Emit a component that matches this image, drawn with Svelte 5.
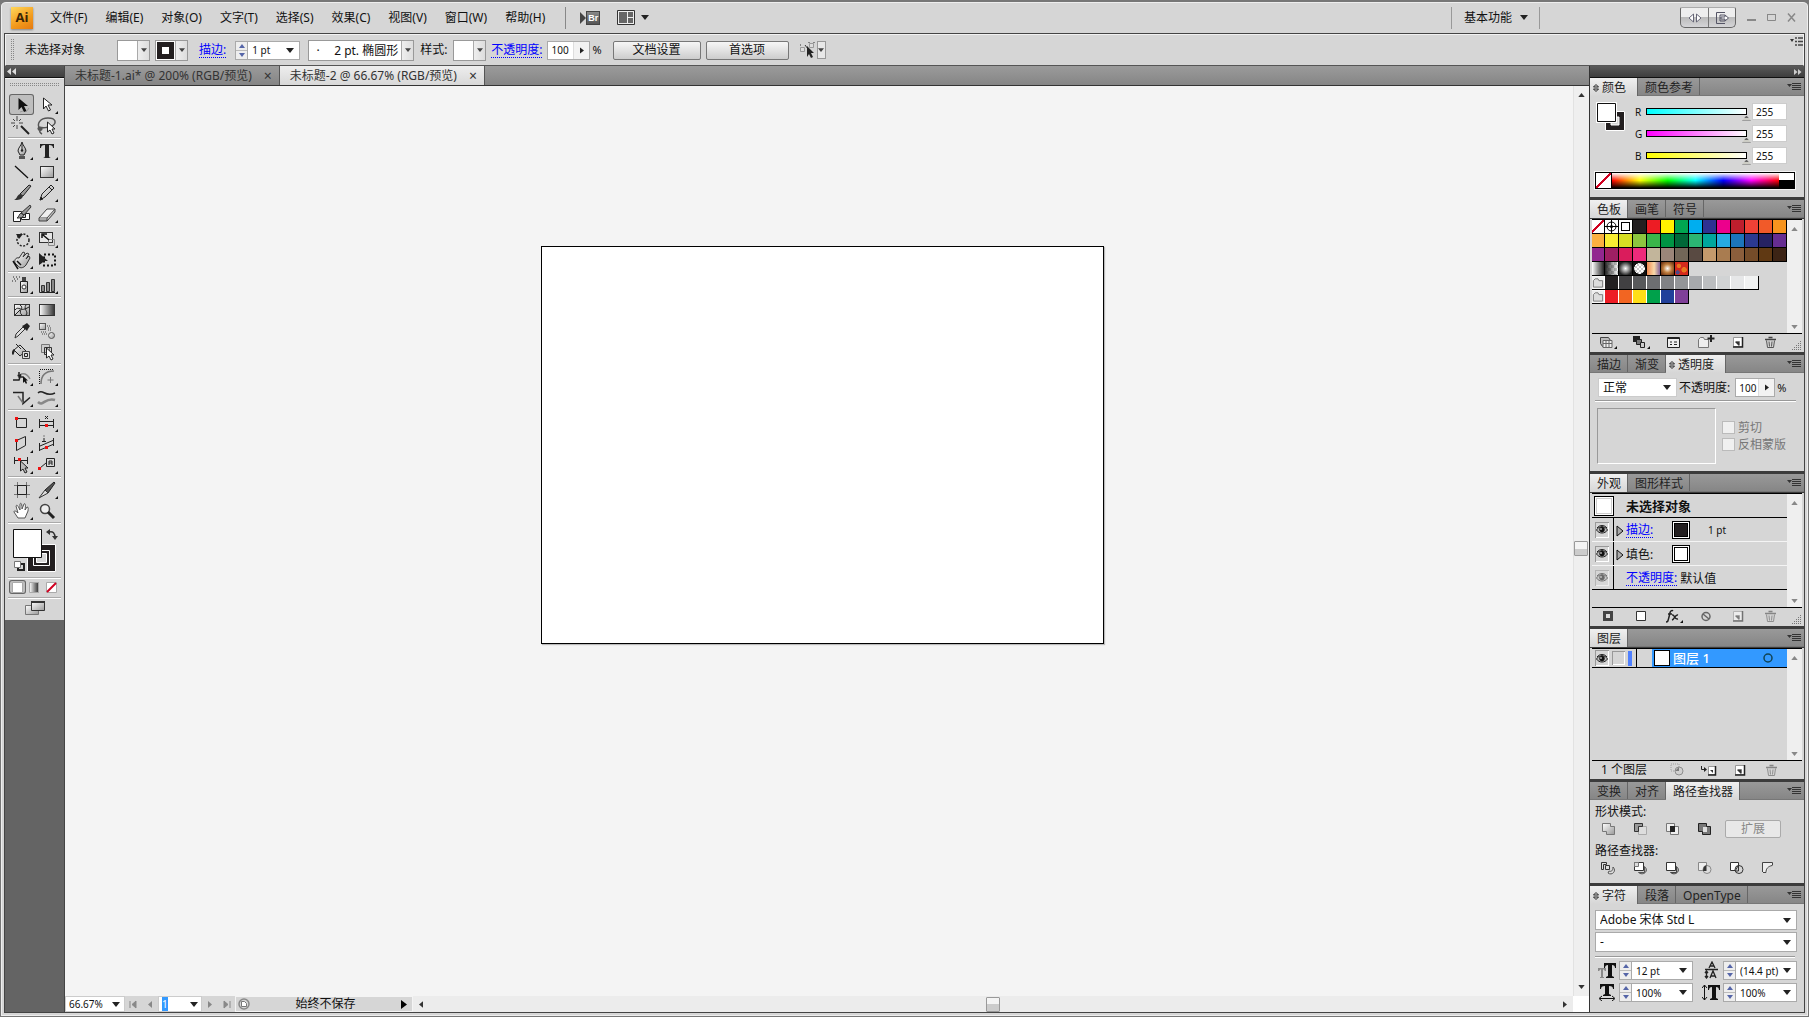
<script lang="ts">
	const menus = ['文件(F)', '编辑(E)', '对象(O)', '文字(T)', '选择(S)', '效果(C)', '视图(V)', '窗口(W)', '帮助(H)'];

	type Tool = { name: string; art: string; more?: boolean; on?: boolean };

	const dark = 'fill="none" stroke="#222"';
	const grey = 'fill="none" stroke="#777"';

	const toolGroups: Tool[][] = [
		[
			{ name: '选择', on: true, art: '<path d="M7.500 3v12l3-3 2.500 5 2.500-1-2.500-5h4z" fill="#111"/><path d="M9 17l3-1M15 17l3-4" stroke="#999"/>' },
			{ name: '直接选择', more: true, art: '<path d="M7.500 3v11l2.500-3 2.500 5 2-1-2.500-5h4z" fill="#fff" stroke="#222"/>' },
			{ name: '魔棒', art: '<path d="M10 10l8 8" stroke="#222" stroke-width="2"/><path d="M6 0v5M6 9v4M0 7h4M8 7h4M2 3l2 2M2 11l2-2M10 3l-2 2" stroke="#444"/>' },
			{ name: '套索', art: '<path d="M4 13C0 8 4 2 12 2s9 5 4 8c-4 2-10 2-13 1-2 2 0 4 2 3s0-4-1-1 0 4 2 5" fill="none" stroke="#555" stroke-width="1.500"/><path d="M11.500 6v10l2.500-2 2 4 2-1-2-4h3z" fill="#fff" stroke="#222"/>' }
		],
		[
			{ name: '钢笔', more: true, art: '<path d="M11 1c-1 4-4 6-4 9l2 4h4l2-4c0-3-3-5-4-9z" fill="url(#metal)" stroke="#222"/><path d="M11 3v6" stroke="#222"/><circle cx="11" cy="9.500" r="1.200" fill="#222"/><path d="M8 15h6v3H8z" fill="#555"/>' },
			{ name: '文字', more: true, art: '<path d="M4 3h14v4h-1c0-2-1-3-4-3v11c0 1 1 2 2 2H7c1 0 2-1 2-2V4C6 4 5 5 5 7H4z" fill="#222"/>' },
			{ name: '直线段', more: true, art: '<path d="M4 4l13 12" stroke="#111" stroke-width="1.300"/>' },
			{ name: '矩形', more: true, art: '<rect x="4.500" y="4.500" width="13" height="11" fill="url(#metal)" stroke="#333"/>' },
			{ name: '画笔', art: '<path d="M18 2l2 1-8 10-3-2z" fill="#999" stroke="#222"/><path d="M9 11l3 2c-1 4-5 4-9 4 3-1 3-5 6-6z" fill="#333"/>' },
			{ name: '铅笔', more: true, art: '<path d="M4 17l2-6L15 2l3 3-9 9z" fill="url(#metal)" stroke="#222"/><path d="M4 17l1-3 2 2zM13 4l3 3" fill="#111" stroke="#222"/>' },
			{ name: '斑点画笔', art: '<path d="M2.500 7.500h8v8h8v-6h-4v4h-5v4h-7z" fill="#fff" stroke="#222"/><path d="M19 1l1 2-7 8-3-2zM10 9l3 2c-1 3-4 3-7 3 2-1 2-4 4-5z" fill="#999" stroke="#333"/>' },
			{ name: '橡皮擦', more: true, art: '<path d="M3 14l8-9h8l-8 9z" fill="#eee" stroke="#444"/><path d="M3 14v3h8v-3M11 17l8-9V5" fill="#aaa" stroke="#444"/>' }
		],
		[
			{ name: '旋转', more: true, art: '<circle cx="12" cy="11" r="6" fill="none" stroke="#222" stroke-width="1.500" stroke-dasharray="2 1.500"/><path d="M5 5h7l-4 5z" fill="#222"/>' },
			{ name: '比例缩放', more: true, art: '<rect x="3.500" y="3.500" width="13" height="10" fill="#e6e6e6" stroke="#333"/><path d="M12.500 10.500h6v6h-6z" fill="none" stroke="#888"/><path d="M7 6l6 5M6 9V5h5" fill="none" stroke="#111" stroke-width="1.500"/>' },
			{ name: '变形', more: true, art: '<path d="M4 13c-1-3 1-6 4-5l4-6 2 1-2 4 4-4 2 1-3 5 3-3 1 2-4 7c-3 4-7 3-8 1z" fill="url(#metal)" stroke="#333"/><path d="M2 11l5 8M6 11l4 4" stroke="#111" stroke-width="1.500"/>' },
			{ name: '自由变换', art: '<path d="M8 4.500h11v11H8z" fill="none" stroke="#111" stroke-width="2" stroke-dasharray="2 2"/><path d="M3 3v12l3-2 2-2 4 0z" fill="#222"/>' }
		],
		[
			{ name: '符号喷枪', more: true, art: '<path d="M9.500 6.500h7v11h-7z" fill="url(#metal)" stroke="#222"/><path d="M11 2h4v4h-4z" fill="#444"/><circle cx="13" cy="12" r="2" fill="#fff" stroke="#333"/><path d="M2 2h8M3 4h6M1 6h6" stroke="#222" stroke-dasharray="1 2"/>' },
			{ name: '柱形图', more: true, art: '<path d="M3.500 2v15.500H19" fill="none" stroke="#222"/><path d="M5.500 10.500h3v6h-3zM10.500 7.500h3v9h-3zM15.500 4.500h3v12h-3z" fill="#888" stroke="#333"/>' }
		],
		[
			{ name: '网格', art: '<rect x="3.500" y="4.500" width="15" height="11" fill="url(#metal)" stroke="#333"/><path d="M4 10c4-5 5 3 14-3M9 5c5 3-3 6 2 10M15 5c-3 4 3 7 0 10M4 15l5-5" fill="none" stroke="#222"/>' },
			{ name: '渐变', art: '<rect x="3.500" y="4.500" width="15" height="11" fill="url(#ramp)" stroke="#333"/>' },
			{ name: '吸管', more: true, art: '<path d="M4 17l1-4 7-7 2 2-7 7z" fill="#ddd" stroke="#333"/><path d="M11 5l2-1 3-2 3 3-2 3-1 2z" fill="#222"/>' },
			{ name: '混合', art: '<rect x="3.500" y="2.500" width="6" height="6" fill="url(#metal)" stroke="#555"/><circle cx="15.500" cy="14.500" r="3" fill="url(#metal)" stroke="#555"/><path d="M11 5h3M12 7h4M5 11h6M6 13h5M12 9h4" stroke="#444" stroke-dasharray="1 1"/>' },
			{ name: '实时上色', art: '<path d="M3 8l6-5 6 6-6 5z" fill="url(#metal)" stroke="#222"/><path d="M3 7c-3 2-2 6-1 6s1-3 2-4z" fill="#222"/><path d="M5 2l5 5" stroke="#222" fill="none"/><path d="M11.500 9.500h7v7h-7z" fill="#ddd" stroke="#444"/><path d="M13.500 11.500h3v3h-3z" fill="none" stroke="#222"/>' },
			{ name: '实时上色选择', art: '<path d="M5.500 2.500h8v8h-8z" fill="#ccc" stroke="#777"/><path d="M8.500 5.500h7v7h-7z" fill="none" stroke="#333"/><path d="M10.500 6v10l2.500-2 2 4 2-1-2-4h3z" fill="#fff" stroke="#222"/>' }
		],
		[
			{ name: '变形路径', more: true, art: '<path d="M2 13h6l2-6M8 5v5h4M6.500 8.500h3" fill="none" stroke="#222" stroke-width="1.500"/><path d="M10 7c4-1 7 1 9 5" fill="none" stroke="#888" stroke-width="1.500"/><path d="M12 9v7l1.500-1.500 1.500 2.500 1-1-1-2.500h2z" fill="#111"/>' },
			{ name: '圆角路径', more: true, art: '<path d="M4 2.500h14M3.500 4v13" stroke="#111" stroke-dasharray="1 1"/><path d="M5 17C5 9 9 4 18 4" fill="none" stroke="#777" stroke-width="1.500"/><path d="M14.500 10v6M11.500 13h6" stroke="#777"/>' },
			{ name: '折线路径', more: true, art: '<path d="M2 4.500h10v11l7-6" fill="none" stroke="#222" stroke-width="1.500"/><path d="M7 8l5 7" fill="none" stroke="#777" stroke-width="1.500"/>' },
			{ name: '曲线路径', more: true, art: '<path d="M2 5c5-5 7 5 17 0" fill="none" stroke="#222" stroke-width="1.500"/><path d="M2 14c5 5 7-5 17-2" fill="none" stroke="#888" stroke-width="2.500"/>' }
		],
		[
			{ name: '矩形标注', more: true, art: `<path d="M5.500 5.500h10v9h-10z" ${dark}/><path d="M4 4h3v3H4z" fill="#e11"/>` },
			{ name: '距离标注', more: true, art: `<path d="M3.500 6v9M17.500 6v9M3 8.500h15M3 12.500h15M9 3l3 3M12 3L9 6" ${dark}/><path d="M9 11h3v3H9z" fill="#e11"/>` },
			{ name: '斜切标注', more: true, art: `<path d="M5.500 6.500l9-4v9l-9 5z" ${dark}/><path d="M4 5h3v3H4z" fill="#e11"/>` },
			{ name: '信息标注', more: true, art: `<path d="M3.500 9v8M17.500 4v8M4 12l14-6M4 16l14-6M8 1.500v1M8 4v4M6 7.500h4" ${dark}/><path d="M9 12h3v3H9z" fill="#e11"/>` },
			{ name: '尺寸选择', more: true, art: `<path d="M3.500 2v7M16.500 2v7M3 5.500h14" ${dark}/><path d="M7 3h3v3H7z" fill="#e11"/><path d="M9.500 6v10l2.500-2 2 4 2-1-2-4h3z" fill="#bbb" stroke="#222"/>` },
			{ name: '文字标注', more: true, art: `<path d="M10.500 3.500h8v8h-8zM10 8L4 13M13 10V6h3v4M13 8h3" ${dark}/><path d="M2 12h3v3H2z" fill="#e11"/>` }
		],
		[
			{ name: '画板', art: `<path d="M6.500 2v16M15.500 2v16M3 5.500h16M3 14.500h16" ${grey}/><path d="M6.500 5.500h9v9h-9z" ${dark}/>` },
			{ name: '切片', more: true, art: '<path d="M18 2l1 1-7 10-3-3z" fill="#555" stroke="#222"/><path d="M9 10l3 3-9 5z" fill="#ddd" stroke="#333"/>' },
			{ name: '抓手', more: true, art: '<path d="M7 17L3 11c0-2 2-1 4 1L5 5c1-2 2 0 4 4V3c1-2 2 0 2 5l2-5c1-1 2 0 1 6l2-3c2 0 1 2 1 4l-3 7z" fill="#fff" stroke="#555"/>' },
			{ name: '缩放', art: '<circle cx="9" cy="8" r="4.500" fill="#eee" stroke="#444" stroke-width="1.500"/><path d="M12 11l6 6" stroke="#222" stroke-width="3"/>' }
		]
	];

	const plainRows = [
		['none', 'registration', 'white-boxed', '#231f20', '#ed1c24', '#fff200', '#00a651', '#00aeef', '#2e3192', '#ec008c', '#be1e2d', '#ef4136', '#f15a29', '#f7941e'],
		['#fbb040', '#f9ed32', '#d7df23', '#8dc63f', '#39b54a', '#009444', '#006838', '#2bb673', '#00a79d', '#27aae1', '#1c75bc', '#2b3990', '#262262', '#662d91'],
		['#92278f', '#9e1f63', '#da1c5c', '#ee2a7b', '#c2b59b', '#9b8579', '#726658', '#594a42', '#c49a6c', '#a97c50', '#8b5e3c', '#754c29', '#603913', '#3c2415'],
		[
			'linear-gradient(90deg,#fff,#222)',
			'linear-gradient(90deg,#222,#fff0),repeating-conic-gradient(#ccc 0 25%,#fff 0 50%) 0 0/6px 6px',
			'radial-gradient(#fff,#222 75%)',
			'radial-gradient(#fff0 55%,#111 60%),repeating-conic-gradient(#ccc 0 25%,#fff 0 50%) 0 0/4px 4px',
			'linear-gradient(90deg,#f08a50,#f9d9a8 55%,#83639a)',
			'radial-gradient(#fff,#c08040 45%,#5a2008)',
			'radial-gradient(circle at 70% 60%,#e8771e 20%,#0000 25%),radial-gradient(circle at 20% 80%,#4a4a8a 12%,#0000 16%),radial-gradient(circle at 30% 30%,#e8771e 14%,#d42a1c 20%)'
		]
	];
	const groupRows = [
		['#231f20', '#414042', '#58595b', '#6d6e71', '#808285', '#939598', '#a7a9ac', '#bcbec0', '#d1d3d4', '#e6e7e8', '#f1f2f2'],
		['#ed1c24', '#f26522', '#ffde17', '#00a14b', '#21409a', '#7f3f98']
	];

	const newIcon = '<path d="M3.500 2.500h9v9h-9z" fill="#fff" stroke="#999"/><path d="M12.500 2v10H3" fill="none" stroke="#222" stroke-width="1.500"/><path d="M5 7h4v4z" fill="#333"/><path d="M5.500 6.500h4v4" fill="none" stroke="#777"/>';
	const trashIcon = '<path d="M2 4.500h11M5.500 2.500h4" fill="none" stroke="#444" stroke-width="1.500"/><path d="M3.500 5.500l1 7h6l1-7M6 6.500l.500 5M9 6.500l-.500 5" fill="none" stroke="#555"/>';
	const swatchFooter = [
		{ name: '色板库', more: true, art: '<path d="M1.500 2.500h8l2 3v6h-8l-2-3z" fill="#bbb" stroke="#444"/><path d="M4 5.500h9v7H4zM4 8.500h9M7 5v7M10 5v7" fill="#eee" stroke="#666"/>' },
		{ name: '显示色板类型', more: true, art: '<path d="M1 1h7v6H1z" fill="#222"/><path d="M4.500 4.500h5v5h-5z" fill="#777" stroke="#222"/><path d="M8.500 7.500h4v5h-4z" fill="#ccc" stroke="#222"/>' },
		{ name: '色板选项', art: '<path d="M2.500 2.500h12v10h-12z" fill="#eee" stroke="#222"/><path d="M2 3.500h13M5 7h2M9 7h3M5 9.500h2M9 9.500h3" stroke="#222"/>' },
		{ name: '新建颜色组', art: '<path d="M1.500 4.500l2-2h3l1 2h4v8h-10z" fill="#eee" stroke="#777"/><path d="M14 0v7M10.500 3.500h7" stroke="#222" stroke-width="2"/>' },
		{ name: '新建色板', art: newIcon },
		{ name: '删除色板', art: trashIcon }
	];
	const appearanceFooter = [
		{ name: '添加新描边', art: '<path d="M4 2h10v10H4z" fill="#444"/><path d="M7 5h4v4H7z" fill="#ddd"/>' },
		{ name: '添加新填色', art: '<path d="M4.500 2.500h9v9h-9z" fill="#fff" stroke="#333"/>' },
		{ name: '添加新效果', more: true, art: '<path d="M1 13c2 0 2-1 3-5l1-4c0-2 2-3 3-2M3 5h4M7 6c3-1 2 5 6 4M13 6c-3-1-3 4-6 5" fill="none" stroke="#222" stroke-width="1.500"/>' },
		{ name: '清除外观', art: '<circle cx="9" cy="7.500" r="4" fill="none" stroke="#666" stroke-width="1.500"/><path d="M6 5l6 5" stroke="#666" stroke-width="1.500"/>' },
		{ name: '复制所选项目', dim: true, art: newIcon },
		{ name: '删除所选项目', dim: true, art: trashIcon }
	];
	const layerFooter = [
		{ name: '建立剪切蒙版', dim: true, art: '<path d="M2 1h8v7H2z" fill="none" stroke="#777" stroke-dasharray="1 1"/><circle cx="10" cy="8" r="4" fill="#ccc" stroke="#555"/><path d="M6 8l4-4v4z" fill="#333"/>' },
		{ name: '创建新子图层', art: '<path d="M1.500 3v3.500H5" fill="none" stroke="#222"/><path d="M4 4v5l3-2.500z" fill="#222"/><path d="M8.500 3.500h7v8h-7z" fill="#fff" stroke="#999"/><path d="M15.500 3v9H8" fill="none" stroke="#222" stroke-width="1.500"/><path d="M10 7h3v3z" fill="#333"/>' },
		{ name: '创建新图层', art: newIcon },
		{ name: '删除所选图层', dim: true, art: trashIcon }
	];

	const shapeModes = [
		{ name: '联集', art: '<path d="M2.500 1.500h8v3h4v8h-8v-3h-4z" fill="url(#metal)" stroke="#777"/>' },
		{ name: '减去顶层', art: '<path d="M6.500 4.500h8v8h-8z" fill="#ddd" stroke="#aaa"/><path d="M2.500 1.500h8v3h-4v5h-4z" fill="#999" stroke="#333"/>' },
		{ name: '交集', art: '<path d="M2.500 1.500h8v8h-8zM6.500 4.500h8v8h-8z" fill="#eee" stroke="#777"/><path d="M6 4h5v6H6z" fill="#222"/>' },
		{ name: '差集', art: '<path d="M2.500 1.500h8v3h4v8h-8v-3h-4z" fill="#777" stroke="#222"/><path d="M7 5h4v5H7z" fill="#ddd"/>' }
	];
	const pathModes = [
		{ name: '分割', art: '<path d="M1.500 1.500h5v2h-3v5h-2z" fill="#ddd" stroke="#333"/><path d="M5.500 4.500h4v4h-4z" fill="#ddd" stroke="#333"/><path d="M13 6c4 4-1 9-5 6l1-2c2 1 4 0 4-4z" fill="#ddd" stroke="#555"/>' },
		{ name: '修边', art: '<path d="M2.500 1.500h9v8h-9z" fill="#fff" stroke="#333"/><path d="M2.500 1.500h4v4h-4z" fill="#ddd" stroke="#777"/><path d="M12.500 5.500c5 4-1 10-6 6h6z" fill="#bbb" stroke="#555"/>' },
		{ name: '合并', art: '<path d="M2.500 1.500h9v8h-9z" fill="#fff" stroke="#333"/><path d="M12.500 5.500c5 4-1 10-6 6h6z" fill="#bbb" stroke="#444"/>' },
		{ name: '裁剪', art: '<path d="M2.500 1.500h8v8h-8z" fill="#eee" stroke="#888"/><circle cx="11" cy="8.500" r="4" fill="#ddd" stroke="#888"/><path d="M10.500 4v6H7c0-3 1-5 3.500-6z" fill="#333"/>' },
		{ name: '轮廓', art: '<path d="M2.500 1.500h8v8h-8z" fill="#fff" stroke="#333"/><circle cx="11" cy="8.500" r="4" fill="none" stroke="#333"/><path d="M10.500 4v6H7z" fill="#ccc" stroke="#333"/>' },
		{ name: '减去后方对象', art: '<path d="M2.500 1.500h10v3c-4 0-5 3-5 7h-5z" fill="#eee"/><path d="M2.500 11V1.500h10v3M3 11.500h3c0-4 2-6 6-7" fill="none" stroke="#444"/>' }
	];

	const charFields = [
		{ name: '字体大小', value: '12 pt', art: '<path d="M0 7h8v3H7L5 8v8h1v1H2v-1h1V8L1 10H0z" fill="#888"/><path d="M6 2h12v5h-1c0-2-1-3-3-3v11l2 1v1H8v-1l2-1V4C8 4 7 5 7 7H6z" fill="#111"/>' },
		{ name: '行距', value: '(14.4 pt)', art: '<path d="M7 7l3-6 3 6M8 5h4M3 8.500h13M8 17l3-7 3 7M9 15h4M4.500 10v7M3 12l1.500-2L6 12M3 15l1.500 2L6 15" fill="none" stroke="#222" stroke-width="1.300"/>' },
		{ name: '水平缩放', value: '100%', art: '<path d="M2 1h14v5h-1c0-2-1-3-4-3v8l2 1v1H5v-1l2-1V3C4 3 3 4 3 6H2z" fill="#111"/><path d="M2 15.500h14M4 13l-3 2.500L4 18M14 13l3 2.500-3 2.500" fill="none" stroke="#111"/>' },
		{ name: '垂直缩放', value: '100%', art: '<path d="M6 2h12v5h-1c0-2-1-3-3-3v11l2 1v1H8v-1l2-1V4C8 4 7 5 7 7H6z" fill="#111"/><path d="M2.500 2v15M0 5l2.500-3L5 5M0 14l2.500 3L5 14" fill="none" stroke="#111"/>' }
	];

	const channels = [
		{ name: 'R', cls: 'cyan' },
		{ name: 'G', cls: 'magenta' },
		{ name: 'B', cls: 'yellow' }
	];
	let rgb = $state([255, 255, 255]);
</script>

{#snippet down(cls = '')}
	<svg class="down {cls}" width="8" height="5" viewBox="0 0 8 5" aria-hidden="true"><path d="M0 0h8L4 5z" /></svg>
{/snippet}

{#snippet play(cls = '')}
	<svg class="play {cls}" width="6" height="9" viewBox="0 0 6 9" aria-hidden="true"><path d="M0 0v9l6-4.500z" /></svg>
{/snippet}

{#snippet stepper(name)}
	<span class="stepper">
		<button aria-label="增加{name}"><svg width="6" height="4" viewBox="0 0 6 4"><path d="M0 4h6L3 0z" /></svg></button>
		<button aria-label="减少{name}"><svg width="6" height="4" viewBox="0 0 6 4"><path d="M0 0h6L3 4z" /></svg></button>
	</span>
{/snippet}

{#snippet combo(name, value, cls = '', step = false)}
	<span class="combo {cls}">
		{#if step}{@render stepper(name)}{/if}
		<select aria-label={name}><option>{value}</option></select>
		{@render down()}
	</span>
{/snippet}

{#snippet percent(id)}
	<span class="percent">
		<input {id} value="100" />
		<button aria-label="调整不透明度">{@render play()}</button>
	</span>
	<span class="unit">%</span>
{/snippet}

{#snippet tabs(names, active, arrows = false)}
	<div class="tabs">
		{#each names as name, i}
			<button class="tab" class:active={i === active} class:arrows={arrows && i === active}>
				{#if arrows && i === active}
					<svg width="6" height="8" viewBox="0 0 6 8"><path d="M.500 3L3 .500 5.500 3zM.500 5L3 7.500 5.500 5z" fill="none" stroke="#222" /></svg>
				{/if}
				{name}
			</button>
		{/each}
		<button class="panel-menu" aria-label="面板菜单">
			<svg width="14" height="9" viewBox="0 0 14 9"><path d="M0 2h5L2.500 5z" fill="#333" /><path d="M5 1.500h9M5 3.500h9M5 5.500h9M5 7.500h9" stroke="#333" /></svg>
		</button>
	</div>
{/snippet}

{#snippet scroll()}
	<div class="scroll">
		<svg width="7" height="4" viewBox="0 0 8 5"><path d="M0 5h8L4 0z" /></svg>
		<svg width="7" height="4" viewBox="0 0 8 5"><path d="M0 0h8L4 5z" /></svg>
	</div>
{/snippet}

{#snippet iconButtons(items)}
	{#each items as item}
		<button class="icon" class:dim={item.dim} aria-label={item.name}>
			<svg width="18" height="15" viewBox="0 0 18 15">
				{@html item.art}
				{#if item.more}<path d="M18 11v3h-3z" fill="#111" />{/if}
			</svg>
		</button>
	{/each}
{/snippet}

{#snippet grip()}
	<svg class="grip" width="10" height="10" viewBox="0 0 10 10">
		<path d="M8 1.500h1M6 3.500h3M4 5.500h5M2 7.500h7M0 9.500h9" stroke="#777" stroke-dasharray="1 1" />
	</svg>
{/snippet}

{#snippet eye(dim = false)}
	<button class="eye" class:dim aria-label="切换可见性">
		<svg width="12" height="9" viewBox="0 0 12 9">
			<path d="M.500 5C3 .500 9 .500 11.500 5 9 9 3 9 .500 5z" fill="#bbb" stroke="#222" />
			<circle cx="6" cy="4.500" r="2.700" fill="#111" /><circle cx="5" cy="4" r="1" fill="#aaa" />
			<path d="M1 3C4-.500 8-.500 11 3" fill="none" stroke="#222" />
		</svg>
	</button>
{/snippet}

<div class="window">
	<header class="menubar">
		<div class="logo">
			<svg width="0" height="0" viewBox="0 0 1 1">
				<defs>
					<linearGradient id="metal" x2="1" y2="1"><stop stop-color="#fff" /><stop offset="1" stop-color="#999" /></linearGradient>
					<linearGradient id="ramp"><stop stop-color="#fff" /><stop offset="1" stop-color="#333" /></linearGradient>
				</defs>
			</svg>
			Ai
		</div>
		<nav>
			{#each menus as menu}<button>{menu}</button>{/each}
		</nav>
		<div class="launch">
			<button class="bridge" aria-label="转到 Bridge">
				<svg width="6" height="14" viewBox="0 0 6 14"><path d="M0 1v12l6-6z" fill="#444" /></svg><span>Br</span>
			</button>
			<button class="arrange" aria-label="排列文档">
				<svg width="18" height="15" viewBox="0 0 18 15"><path d="M.500.500h17v14H.500z" fill="#eee" stroke="#333" /><path d="M2 2h8v11H2zM11 2h5v5h-5zM11 8h5v5h-5z" fill="#666" /></svg>
				{@render down()}
			</button>
		</div>
		<button class="workspace-name">基本功能 {@render down()}</button>
		<div class="mode">
			<button aria-label="切换宽度"><svg width="14" height="10" viewBox="0 0 14 10"><path d="M5.500 1v8L1 5zM8.500 1v8L13 5z" fill="#fff" stroke="#667" /></svg></button>
			<button aria-label="切换面板"><svg width="13" height="12" viewBox="0 0 13 12"><path d="M9 .500H.500v11H9M9 3H4v6h5" fill="none" stroke="#556" /><path d="M5 5h4V3l3.500 3L9 9V7H5z" fill="#fff" stroke="#556" /></svg></button>
		</div>
		<div class="sysbuttons">
			<button aria-label="最小化"><svg width="10" height="9" viewBox="0 0 10 9"><path d="M0 7h9" stroke="#888" stroke-width="2" /></svg></button>
			<button aria-label="最大化"><svg width="10" height="9" viewBox="0 0 10 9"><path d="M.500 1.500h8v6h-8zM0 1.500h9" fill="none" stroke="#888" /></svg></button>
			<button aria-label="关闭"><svg width="10" height="9" viewBox="0 0 10 9"><path d="M1 .500l7 8M8 .500l-7 8" stroke="#888" stroke-width="1.500" /></svg></button>
		</div>
	</header>

	<div class="frame">
		<div class="control">
			<i class="handle"></i>
			<span class="selection">未选择对象</span>
			<button class="well" aria-label="填色"><i></i><b>{@render down('small')}</b></button>
			<button class="well stroke" aria-label="描边颜色"><i></i><b>{@render down('small')}</b></button>
			<a class="stroke-link" href="#stroke">描边:</a>
			{@render combo('描边粗细', '1 pt', 'weight', true)}
			<button class="brush"><span>·</span><em>2 pt. 椭圆形</em><b>{@render down('small')}</b></button>
			<span>样式:</span>
			<button class="well" aria-label="图形样式"><i></i><b>{@render down('small')}</b></button>
			<a href="#opacity">不透明度:</a>
			{@render percent('bar-opacity')}
			<button class="push">文档设置</button>
			<button class="push second">首选项</button>
			<button class="similar" aria-label="选择类似的对象">
				<svg width="15" height="16" viewBox="0 0 15 16"><path d="M.500 5.500h4v4h-4zM9.500 1.500h4v4h-4z" fill="#ddd" stroke="#999" /><path d="M0 3h1M5 3l3 4M9 0v1M14 0v1" stroke="#333" /><path d="M7 4v11l2-3 2 4 2-1-2-4h3z" fill="#222" /></svg>
				<b>{@render down('small')}</b>
			</button>
			<button class="bar-menu" aria-label="控制栏菜单">
				<svg width="13" height="9" viewBox="0 0 13 9"><path d="M0 2h4L2 5z" fill="#333" /><path d="M5 1h2M5 4.500h2M5 8h2M8 1h5M8 4.500h5M8 8h5" stroke="#444" stroke-width="1.500" /></svg>
			</button>
		</div>

		<main>
			<aside class="tools">
				<button class="collapse" aria-label="折叠工具">
					<svg width="10" height="7" viewBox="0 0 10 7"><path d="M4 0v7L0 3.500zM9 0v7L5 3.500z" fill="#ddd" /></svg>
				</button>
				<div class="toolbox">
					<i class="dots"></i>
					{#each toolGroups as group}
						<div class="tool-group">
							{#each group as tool}
								<button class:on={tool.on} aria-label={tool.name}>
									<svg width="22" height="20" viewBox="0 0 22 20">
										{@html tool.art}
										{#if tool.more}<path d="M22 16v3h-3z" fill="#111" />{/if}
									</svg>
								</button>
							{/each}
						</div>
					{/each}
					<div class="paint">
						<svg width="48" height="46" viewBox="0 0 48 46">
							<path d="M15.500 16.500h28v27h-28z" fill="#231f20" stroke="#fff" />
							<path d="M21.500 22.500h16v15h-16z" fill="none" stroke="#fff" />
							<path d="M24.500 25.500h10v9h-10z" fill="#d6d6d6" stroke="#fff" />
							<path d="M1.500 1.500h28v28h-28z" fill="#fff" stroke="#111" />
							<path d="M37 4c4-1 6 1 6 6" fill="none" stroke="#333" stroke-width="1.500" /><path d="M34 4l4-3v6zM40 8h6l-3 4z" fill="#333" />
							<path d="M6 36h6v6H6z" fill="none" stroke="#222" stroke-width="2" />
							<path d="M2.500 33.500h6v6h-6z" fill="#fff" stroke="#777" />
						</svg>
					</div>
					<div class="fills">
						<button class="on" aria-label="颜色"><svg width="11" height="11" viewBox="0 0 11 11"><path d="M.500.500h10v10H.500z" fill="#fff" stroke="#aaa" /></svg></button>
						<button aria-label="渐变"><svg width="11" height="11" viewBox="0 0 11 11"><path d="M.500.500h9v10h-9z" fill="url(#ramp)" stroke="#aaa" /></svg></button>
						<button aria-label="无"><svg width="11" height="11" viewBox="0 0 11 11"><path d="M.500.500h10v10H.500z" fill="#fff" stroke="#aaa" /><path d="M1 10l9-9" stroke="#d00020" stroke-width="2" /></svg></button>
					</div>
					<button class="screen" aria-label="更改屏幕模式">
						<svg width="22" height="16" viewBox="0 0 22 16"><path d="M1.500 5.500h13v9h-13z" fill="url(#metal)" stroke="#777" /><path d="M7.500 1.500h13v9h-13z" fill="url(#metal)" stroke="#333" /><path d="M7 2h14" stroke="#333" stroke-width="2" /></svg>
					</button>
				</div>
			</aside>

			<section class="document">
				<div class="doc-tabs">
					<div class="doc-tab"><button>未标题-1.ai* @ 200% (RGB/预览)</button><button class="x" aria-label="关闭标签">×</button></div>
					<div class="doc-tab active"><button>未标题-2 @ 66.67% (RGB/预览)</button><button class="x" aria-label="关闭标签">×</button></div>
				</div>
				<div class="view">
					<div class="canvas"><div class="artboard"></div></div>
					<div class="vscroll">{@render scroll()}<i></i></div>
				</div>
				<footer class="status">
					{@render combo('缩放', '66.67%', 'zoom')}
					<span class="pager">
						<button aria-label="首页"><svg width="8" height="9" viewBox="0 0 8 9"><path d="M1 1v7M7 1v7L3 4.500z" stroke="#888" fill="#888" /></svg></button>
						<button aria-label="上一页"><svg width="8" height="9" viewBox="0 0 8 9"><path d="M6 1v7L2 4.500z" fill="#888" /></svg></button>
					</span>
					<span class="combo page"><input aria-label="画板编号" value="1" />{@render down()}</span>
					<span class="pager">
						<button aria-label="下一页"><svg width="8" height="9" viewBox="0 0 8 9"><path d="M2 1v7l4-3.500z" fill="#888" /></svg></button>
						<button aria-label="末页"><svg width="8" height="9" viewBox="0 0 8 9"><path d="M7 1v7M1 1v7l4-3.500z" stroke="#888" fill="#888" /></svg></button>
					</span>
					<button class="save">
						<svg width="12" height="12" viewBox="0 0 12 12"><circle cx="6" cy="6" r="5" fill="none" stroke="#888" stroke-width="1.500" /><path d="M3.500 3.500h3l2 2v3h-5z" fill="#fff" stroke="#777" /></svg>
						<span>始终不保存</span>
						{@render play()}
					</button>
					<div class="hscroll">
						<svg width="4" height="7" viewBox="0 0 5 8"><path d="M5 0v8L0 4z" /></svg>
						<i></i>
						<svg width="4" height="7" viewBox="0 0 5 8"><path d="M0 0v8l5-4z" /></svg>
					</div>
				</footer>
			</section>

			<aside class="dock">
				<button class="collapse right" aria-label="折叠面板">
					<svg width="8" height="6" viewBox="0 0 8 6"><path d="M0 0v6l3.500-3zM4 0v6l3.500-3z" fill="#ccc" /></svg>
				</button>

				<section>
					{@render tabs(['颜色', '颜色参考'], 0, true)}
					<div class="body color">
						<div class="mix">
							<svg width="30" height="30" viewBox="0 0 30 30">
								<path d="M9.500 9.500h19v19h-19z" fill="#231f20" stroke="#fff" /><path d="M15 15h8v8h-8z" fill="#d6d6d6" stroke="#fff" />
								<path d="M.500.500h20v20H.500z" fill="#fff" stroke="#fff" /><path d="M1.500 1.500h18v18h-18z" fill="#fff" stroke="#111" />
							</svg>
							<div class="channels">
								{#each channels as c, i}
									<label for="channel-{c.name}">{c.name}</label>
									<span class="ramp {c.cls}"><input type="range" min="0" max="255" aria-label="{c.name} 滑块" bind:value={rgb[i]} /></span>
									<input id="channel-{c.name}" class="num" bind:value={rgb[i]} />
								{/each}
							</div>
						</div>
						<div class="spectrum"><i class="cell none"></i><i class="hues"></i><i class="bw"></i></div>
					</div>
				</section>

				<section>
					{@render tabs(['色板', '画笔', '符号'], 0)}
					<div class="body">
						<div class="list swatches">
							<div class="rows">
								{#each plainRows as row}
									<div class="row">
										{#each row as color}
											{#if color === 'none'}
												<i class="cell none"></i>
											{:else if color === 'registration'}
												<svg class="cell" viewBox="0 0 13 13"><path d="M0 0h13v13H0z" fill="#fff" /><circle cx="6.500" cy="6.500" r="4.500" fill="none" stroke="#000" /><path d="M6.500 0v13M0 6.500h13" stroke="#000" /><circle cx="6.500" cy="6.500" r="1.500" /></svg>
											{:else if color === 'white-boxed'}
												<i class="cell boxed"></i>
											{:else}
												<i class="cell" style:background={color}></i>
											{/if}
										{/each}
									</div>
								{/each}
								{#each groupRows as row}
									<div class="row group">
										<svg class="cell" viewBox="0 0 13 13"><path d="M0 0h13v13H0z" fill="#eee" /><path d="M1.500 11.500v-7l2-2h3l1 2h4v7z" fill="#ddd" stroke="#777" /></svg>
										{#each row as color}<i class="cell" style:background={color}></i>{/each}
									</div>
								{/each}
							</div>
							{@render scroll()}
						</div>
						<div class="footer">{@render iconButtons(swatchFooter)}{@render grip()}</div>
					</div>
				</section>

				<section>
					{@render tabs(['描边', '渐变', '透明度'], 2, true)}
					<div class="body transparency">
						<div class="line">
							{@render combo('混合模式', '正常', 'blend')}
							<label for="panel-opacity">不透明度:</label>
							{@render percent('panel-opacity')}
						</div>
						<hr />
						<div class="mask">
							<div class="thumb"></div>
							<div>
								<label><input type="checkbox" disabled />剪切</label>
								<label><input type="checkbox" disabled />反相蒙版</label>
							</div>
						</div>
					</div>
				</section>

				<section>
					{@render tabs(['外观', '图形样式'], 0)}
					<div class="body">
						<div class="list appearance">
							<div class="rows">
								<div class="item head"><i class="blank"></i><strong>未选择对象</strong></div>
								<div class="item">
									{@render eye()}<span class="entry"><svg class="twisty" width="8" height="12" viewBox="0 0 8 12"><path d="M1 1v10l6-5z" fill="#aaa" stroke="#111" /></svg><a href="#stroke">描边:</a></span><i class="chip black"></i><span>1 pt</span>
								</div>
								<div class="item">
									{@render eye()}<span class="entry"><svg class="twisty" width="8" height="12" viewBox="0 0 8 12"><path d="M1 1v10l6-5z" fill="#aaa" stroke="#111" /></svg>填色:</span><i class="chip"></i>
								</div>
								<div class="item last">{@render eye(true)}<span class="deep"><a href="#opacity">不透明度:</a> 默认值</span></div>
							</div>
							{@render scroll()}
						</div>
						<div class="footer">{@render iconButtons(appearanceFooter)}{@render grip()}</div>
					</div>
				</section>

				<section>
					{@render tabs(['图层'], 0)}
					<div class="body">
						<div class="list layers">
							<div class="rows">
								<div class="layer">
									{@render eye()}<i class="lock"></i><i class="tint"></i>
									<div class="name"><i></i><span>图层 1</span><svg width="10" height="10" viewBox="0 0 10 10"><circle cx="5" cy="5" r="4" fill="none" stroke="#145" stroke-width="1.500" /></svg></div>
								</div>
							</div>
							{@render scroll()}
						</div>
						<div class="footer layer-footer"><span>1 个图层</span>{@render iconButtons(layerFooter)}</div>
					</div>
				</section>

				<section>
					{@render tabs(['变换', '对齐', '路径查找器'], 2)}
					<div class="body pathfinder">
						<p>形状模式:</p>
						<div class="ops">{@render iconButtons(shapeModes)}<button class="expand" disabled>扩展</button></div>
						<p>路径查找器:</p>
						<div class="ops">{@render iconButtons(pathModes)}</div>
					</div>
				</section>

				<section class="fill">
					{@render tabs(['字符', '段落', 'OpenType'], 0, true)}
					<div class="body character">
						{@render combo('字体', 'Adobe 宋体 Std L', 'wide')}
						{@render combo('字体样式', '-', 'wide')}
						<hr />
						<div class="metrics">
							{#each charFields as f}
								<svg width="18" height="18" viewBox="0 0 18 18">{@html f.art}</svg>
								{@render combo(f.name, f.value, 'metric', true)}
							{/each}
						</div>
					</div>
				</section>
			</aside>
		</main>
	</div>
</div>

<style>
	:global(body) {
		margin: 0;
		background: #777;
	}
	.window,
	.window :is(button, input, select) {
		font-family: 'Noto Sans', 'Noto Sans CJK SC', sans-serif;
		font-size: 12px;
		line-height: 16px;
		color: #111;
	}
	.window {
		box-sizing: border-box;
		height: 100vh;
		display: flex;
		flex-direction: column;
		padding: 0 3px 3px;
		border: 1px solid #777;
		border-top-width: 2px;
		border-radius: 6px 6px 0 0;
		background: #d6d6d6;
		box-shadow: inset 0 0 0 1px #eee;
		overflow: hidden;
	}
	.window :is(div, section, aside, i, b, span, input, select, button, a) {
		box-sizing: border-box;
	}
	button {
		padding: 0;
		border: 0;
		background: none;
		white-space: nowrap;
	}
	svg {
		display: block;
		flex: none;
	}
	i,
	em {
		font-style: normal;
	}
	select,
	input {
		min-width: 0;
		margin: 0;
		padding: 0;
		border: 0;
		outline: 0;
		background: transparent;
		appearance: none;
	}
	a,
	.window a {
		color: #00f;
		text-decoration: none;
		border-bottom: 1px dotted #00f;
		line-height: 14px;
	}
	hr {
		height: 1px;
		margin: 0;
		border: 0;
		border-top: 1px solid #999;
		background: #fff;
	}

	/* menu bar */
	.menubar {
		display: flex;
		align-items: center;
		height: 31px;
		padding: 0 8px 0 7px;
	}
	.logo {
		width: 22px;
		height: 22px;
		background: linear-gradient(150deg, #ffd75a, #f29a1c 60%, #e57a10);
		box-shadow: 0 1px 2px #0006;
		font: bold 13px/21px 'Open Sans', sans-serif;
		text-align: center;
		color: #3a2506;
	}
	nav {
		display: flex;
		gap: 18px;
		margin-left: 17px;
	}
	.launch {
		display: flex;
		align-items: center;
		gap: 17px;
		height: 22px;
		margin-left: 20px;
		padding-left: 14px;
		border-left: 1px solid #888;
	}
	.launch button,
	.workspace-name {
		display: flex;
		align-items: center;
	}
	.bridge span {
		width: 14px;
		height: 14px;
		background: linear-gradient(#888, #555);
		border: 1px solid #444;
		font: bold 9px/12px 'Liberation Sans', sans-serif;
		color: #fff;
	}
	.arrange {
		gap: 6px;
	}
	.workspace-name {
		gap: 8px;
		height: 22px;
		margin-left: auto;
		padding: 0 11px 0 12px;
		border: solid #999;
		border-width: 0 1px;
	}
	.mode {
		display: flex;
		margin-left: 140px;
		border: 1px solid #666;
		border-top-color: #aaa;
		border-radius: 2px 2px 5px 5px;
		background: linear-gradient(#eee 50%, #bbb 50%, #d5d5d8);
	}
	.mode button {
		display: grid;
		place-items: center;
		width: 27px;
		height: 19px;
	}
	.mode button + button {
		border-left: 1px solid #777;
	}
	.sysbuttons {
		display: flex;
		gap: 10px;
		margin-left: 11px;
	}
	.down {
		fill: #222;
	}
	.down.small {
		width: 6px;
		height: 4px;
		fill: #444;
	}
	.play {
		fill: #222;
	}

	/* control bar */
	.frame {
		flex: 1;
		min-height: 0;
		display: flex;
		flex-direction: column;
		border: 1px solid #444;
	}
	.control {
		flex: none;
		display: flex;
		align-items: center;
		height: 32px;
		padding-left: 4px;
		border: 1px solid #f2f2f2;
		border-bottom: 1px solid #555;
	}
	.handle,
	.dots {
		background: conic-gradient(#888 25%, #8880 0) 0 0 / 2px 2px;
	}
	.handle {
		width: 4px;
		height: 22px;
	}
	.selection {
		width: 92px;
		margin-left: 11px;
	}
	.well,
	.brush,
	.similar b {
		display: flex;
		height: 21px;
		border: 1px solid #999;
		background: #fff;
	}
	.well {
		width: 33px;
	}
	.well i {
		flex: 1;
	}
	.well b,
	.brush b {
		display: grid;
		place-items: center;
		width: 12px;
		border-left: 1px solid #aaa;
		background: linear-gradient(90deg, #eee, #ddd);
	}
	.well.stroke {
		margin: 0 11px 0 5px;
	}
	.well.stroke i {
		margin: 1px;
		border: 5px solid #231f20;
		background: #fff;
		outline: 1px solid #fff;
		outline-offset: -6px;
	}
	.combo {
		display: flex;
		align-items: center;
		height: 19px;
		border: 1px solid #aaa;
		background: #fff;
	}
	.combo select,
	.combo input {
		flex: 1;
		height: 17px;
		padding: 0 15px 0 4px;
	}
	.combo > .down {
		margin: 0 5px 0 -13px;
		pointer-events: none;
	}
	.window .combo > .stepper + select,
	.window .percent input,
	.window .num,
	.window .page input,
	.window .zoom select {
		font-size: 10px;
	}
	.window .stepper + select {
		padding-right: 12px;
	}
	.stepper {
		flex: none;
		display: grid;
		width: 12px;
		height: 17px;
		border-right: 1px solid #aaa;
		background: #eee;
	}
	.stepper button {
		display: grid;
		place-items: center;
	}
	.stepper button + button {
		border-top: 1px solid #bbb;
	}
	.stepper svg {
		fill: #5565a8;
	}
	.weight {
		width: 65px;
		margin: 0 8px 0 9px;
	}
	.brush {
		width: 106px;
		margin-right: 6px;
	}
	.brush span {
		width: 18px;
		line-height: 19px;
	}
	.brush em {
		flex: 1;
		line-height: 19px;
		text-align: right;
		padding-right: 3px;
	}
	.brush + span {
		width: 33px;
	}
	.control .well + a {
		margin-left: 5px;
	}
	.control .stroke + a {
		margin-left: 0;
	}
	.percent {
		display: flex;
		width: 43px;
		height: 19px;
		border: 1px solid #aaa;
		background: #fff;
	}
	.control .percent {
		margin-left: 5px;
	}
	.percent input {
		flex: 1;
		padding-left: 3px;
	}
	.percent button {
		display: grid;
		place-items: center;
		width: 16px;
		border-left: 1px solid #ddd;
		background: #f2f2f2;
	}
	.percent .play {
		width: 4px;
		height: 7px;
	}
	.unit {
		margin-left: 2px;
		font-size: 11px;
	}
	.push {
		width: 88px;
		height: 19px;
		margin-left: 11px;
		border: 1px solid #777;
		border-radius: 2px;
		background: linear-gradient(#f6f6f6, #e2e2e2 50%, #ccc);
	}
	.push.second {
		width: 83px;
		margin-left: 5px;
	}
	.similar {
		display: flex;
		align-items: center;
		gap: 2px;
		margin-left: 11px;
	}
	.similar b {
		align-items: center;
		justify-content: center;
		width: 9px;
		height: 18px;
		background: #e8e8e8;
	}
	.bar-menu {
		align-self: flex-start;
		margin: 2px 0 0 auto;
	}

	main {
		flex: 1;
		min-height: 0;
		display: grid;
		grid-template-columns: 60px minmax(0, 1fr) 215px;
	}

	/* tools */
	.tools {
		border-right: 1px solid #444;
		background: #646464;
	}
	.collapse {
		flex: none;
		display: flex;
		align-items: center;
		width: 100%;
		height: 12px;
		padding: 0 2px;
		border-bottom: 1px solid #111;
		background: linear-gradient(#5a5a5a, #3e3e3e);
	}
	.collapse.right {
		justify-content: flex-end;
	}
	.toolbox {
		padding: 4px 3px 4px;
		background: #d6d6d6;
		border-top: 1px solid #f2f2f2;
	}
	.dots {
		display: block;
		height: 4px;
		margin: 0 1px 7px;
	}
	.tool-group {
		display: grid;
		grid-template-columns: 25px 25px;
		grid-auto-rows: 21px;
		padding: 0 0 1px 1px;
		margin-bottom: 2px;
		border-bottom: 1px solid #aaa;
		box-shadow: 0 1px #fff;
	}
	.tool-group button {
		display: grid;
		place-items: center;
		border-radius: 3px;
	}
	.tool-group button.on,
	.fills .on {
		background: #bebebe;
		box-shadow: inset 0 0 0 1px #666;
	}
	.paint {
		height: 53px;
		padding: 3px 0 0 4px;
		border-bottom: 1px solid #aaa;
		box-shadow: 0 1px #fff;
	}
	.fills {
		display: grid;
		grid-template-columns: repeat(3, 17px);
		height: 20px;
		padding: 2px 0 3px 1px;
		border-bottom: 1px solid #aaa;
		box-shadow: 0 1px #fff;
	}
	.fills button {
		display: grid;
		place-items: center;
		border-radius: 3px;
	}
	.screen {
		display: block;
		margin: 2px auto 0;
	}

	/* document */
	.document {
		display: flex;
		flex-direction: column;
		min-width: 0;
	}
	.doc-tabs {
		display: flex;
		height: 20px;
		border-bottom: 1px solid #333;
		background: linear-gradient(#9b9b9b, #858585);
	}
	.doc-tab {
		display: flex;
		align-items: center;
		padding: 1px 7px 0 10px;
		gap: 12px;
		border-right: 1px solid #555;
	}
	.window .doc-tab button {
		color: #333;
	}
	.doc-tab.active {
		background: linear-gradient(#eee, #d8d8d8);
	}
	.window .doc-tab .x {
		font-size: 14px;
	}
	.view {
		flex: 1;
		min-height: 0;
		display: flex;
	}
	.canvas {
		flex: 1;
		position: relative;
		background: #f4f4f4;
	}
	.artboard {
		position: absolute;
		left: 476px;
		top: 160px;
		width: 563px;
		height: 398px;
		border: 1px solid #000;
		background: #fff;
		box-shadow: 1px 1px 1px #bbb;
	}
	.scroll {
		display: flex;
		flex-direction: column;
		justify-content: space-between;
		align-items: center;
		width: 15px;
		padding: 7px 0 4px;
		background: #efefef;
		fill: #888;
	}
	.vscroll {
		display: grid;
		width: 16px;
		border-left: 1px solid #e2e2e2;
		background: #efefef;
	}
	.vscroll > :global(*) {
		grid-area: 1 / 1;
	}
	.vscroll .scroll {
		padding: 7px 0;
		fill: #333;
	}
	.vscroll i,
	.hscroll i {
		width: 14px;
		height: 15px;
		border: 1px solid #999;
		border-radius: 1px;
		background: linear-gradient(#f4f4f4 50%, #ccc 50%);
	}
	.vscroll i {
		align-self: center;
		margin-top: 14px;
	}
	.status {
		display: flex;
		height: 16px;
		background: #d6d6d6;
	}
	.status .combo {
		height: 16px;
		border-color: #ccc;
	}
	.status .combo select,
	.status .combo input {
		height: 14px;
		line-height: 14px;
	}
	.zoom {
		width: 60px;
	}
	.status .zoom select {
		padding-left: 3px;
	}
	.status .zoom > .down {
		margin: 0 4px 0 -12px;
	}
	.pager {
		display: flex;
		justify-content: space-around;
		align-items: center;
		width: 33px;
	}
	.page {
		width: 44px;
	}
	.status .page input {
		flex: none;
		width: 6px;
		margin: 0 14px 0 3px;
		padding: 0;
		background: #39f;
		color: #fff;
	}
	.status .page > .down {
		margin: 0 0 0 8px;
	}
	.save {
		display: flex;
		align-items: center;
		justify-content: space-between;
		width: 178px;
		padding: 0 5px 0 2px;
		border: 1px solid #f4f4f4;
	}
	.save span {
		line-height: 14px;
	}
	.save .play {
		fill: #000;
	}
	.hscroll {
		flex: 1;
		display: flex;
		align-items: center;
		justify-content: space-between;
		margin-right: 16px;
		padding: 0 6px;
		background: #ececec;
		box-shadow: 16px 0 #fff;
		fill: #333;
	}

	/* panels */
	.dock {
		display: flex;
		flex-direction: column;
		border-left: 1px solid #333;
		background: #3c3c3c;
	}
	.dock section {
		margin-bottom: 3px;
	}
	.dock section.fill {
		flex: 1;
		display: flex;
		flex-direction: column;
		margin: 0;
	}
	.fill .body {
		flex: 1;
	}
	.tabs {
		display: flex;
		height: 18px;
		background: linear-gradient(#999, #868686);
		border-bottom: 1px solid #777;
	}
	.window .tab {
		display: flex;
		align-items: center;
		gap: 3px;
		padding: 2px 6px 0 7px;
		border-right: 1px solid #666;
		color: #222;
	}
	.tab.active {
		height: 18px;
		background: linear-gradient(#f0f0f0, #d6d6d6);
	}
	.window .tab.arrows {
		padding: 2px 11px 0 3px;
	}
	.panel-menu {
		margin: 0 3px 0 auto;
	}
	.body {
		background: #d6d6d6;
	}
	.color {
		height: 101px;
		padding: 6px 9px 0 6px;
	}
	.mix {
		display: flex;
		gap: 9px;
	}
	.channels {
		display: grid;
		grid-template-columns: 11px 101px 35px;
		grid-auto-rows: 17px;
		gap: 5px 0;
		align-items: center;
		padding-top: 1px;
	}
	.channels label {
		font-size: 10px;
	}
	.num {
		width: 35px;
		height: 17px;
		margin-left: 5px;
		padding-left: 3px;
		border: 1px solid #ccc;
		background: #fff;
	}
	.ramp {
		position: relative;
		height: 7px;
		border: 1px solid #000;
	}
	.ramp.cyan {
		background: linear-gradient(90deg, #0ff, #fff);
	}
	.ramp.magenta {
		background: linear-gradient(90deg, #f0f, #fff);
	}
	.ramp.yellow {
		background: linear-gradient(90deg, #ff0, #fff);
	}
	.ramp input {
		position: absolute;
		left: -5px;
		top: 0;
		width: 109px;
		height: 12px;
		appearance: none;
	}
	.ramp input::-webkit-slider-thumb {
		appearance: none;
		width: 9px;
		height: 5px;
		margin-top: 6px;
		background: linear-gradient(#666 30%, #ccccc4 45% 75%, #666 80%);
		clip-path: polygon(50% 0, 100% 100%, 0 100%);
	}
	.spectrum {
		display: flex;
		height: 17px;
		margin: 8px 0 0 -1px;
		border: 1px solid #000;
		outline: 1px solid #f4f4f4;
	}
	.spectrum .none {
		width: 16px;
		height: 15px;
		border-right: 1px solid #000;
	}
	.hues {
		flex: 1;
		background:
			linear-gradient(#fff, #fff0 50%, #0000 50%, #000),
			linear-gradient(90deg, red, #ff0, #0f0, #0ff, #00f, #f0f, red);
	}
	.bw {
		width: 15px;
		background: linear-gradient(#fff 50%, #000 50%);
	}
	.none {
		background: linear-gradient(135deg, #fff0 44%, #d00020 44% 56%, #fff0 56%), #fff;
	}
	.list {
		display: flex;
		margin: 0 2px;
		border: solid #000;
		border-width: 1px 0;
	}
	.list .rows {
		flex: 1;
	}
	.swatches {
		height: 115px;
		margin-top: 1px;
	}
	.row {
		display: flex;
		gap: 1px;
		width: max-content;
		padding: 0 1px 1px 0;
		background: #000;
	}
	.row.group {
		background: #fff;
		padding: 0;
		border: solid #000;
		border-width: 0 1px 1px 0;
	}
	.cell {
		width: 13px;
		height: 13px;
	}
	.row .cell:first-child {
		width: 12px;
	}
	.boxed {
		border: 1px solid #fff;
		outline: 1px solid #000;
		outline-offset: -3px;
		background: #fff;
	}
	.footer {
		display: flex;
		align-items: center;
		justify-content: space-between;
		height: 18px;
		padding: 0 2px 2px 9px;
	}
	.icon {
		display: grid;
		place-items: center;
	}
	.dim {
		opacity: 0.55;
	}
	.grip {
		align-self: flex-end;
		margin-left: -4px;
	}
	.transparency {
		height: 98px;
		padding: 5px 8px 0 5px;
	}
	.line {
		display: flex;
		align-items: center;
		padding-left: 3px;
		margin-bottom: 3px;
	}
	.blend {
		width: 79px;
		margin-right: 2px;
		border-color: #ccc;
	}
	.line .percent {
		width: 40px;
		margin-left: 5px;
	}
	.mask {
		display: flex;
		gap: 6px;
		padding: 6px 0 0 2px;
	}
	.thumb {
		width: 119px;
		height: 56px;
		border: 1px solid #999;
		border-right-color: #fff;
		border-bottom-color: #fff;
	}
	.mask label {
		display: flex;
		align-items: center;
		gap: 3px;
		height: 17px;
		color: #777;
	}
	.mask div + div {
		padding-top: 11px;
	}
	.mask input {
		width: 13px;
		height: 13px;
		border: 1px solid #bbb;
		background: #f0f0f0;
	}
	.appearance {
		height: 115px;
		margin-top: 1px;
	}
	.item {
		display: flex;
		align-items: center;
		height: 24px;
		border-bottom: 1px solid #f4f4f4;
	}
	.item.head {
		gap: 12px;
		padding-left: 2px;
		border-color: #000;
	}
	.head strong {
		font-size: 13px;
	}
	.item.last {
		border-color: #000;
	}
	.blank {
		width: 20px;
		height: 20px;
		border: 1px solid #000;
		background: #fff;
		box-shadow: inset 0 0 0 1px #fff, inset 0 0 0 2px #ccc;
	}
	.eye {
		display: grid;
		place-items: center;
		width: 14px;
		height: 16px;
		box-shadow: inset 1px 1px #999, inset -1px -1px #fff;
	}
	.item .eye {
		margin: 0 4px 0 3px;
	}
	.entry,
	.deep {
		display: flex;
		align-items: center;
		height: 100%;
		padding-top: 2px;
		border-left: 1px solid #000;
	}
	.entry {
		width: 59px;
		gap: 2px;
		padding-left: 2px;
	}
	.deep {
		gap: 3px;
		padding-left: 12px;
	}
	.chip {
		width: 18px;
		height: 18px;
		border: 1px solid #000;
		outline: 1px solid #000;
		outline-offset: -3px;
		background: #fff;
	}
	.chip.black {
		background: #231f20;
		box-shadow: inset 0 0 0 1px #fff;
	}
	.chip + span {
		margin-left: 18px;
		font-size: 10px;
	}
	.layers {
		height: 113px;
		margin-top: 1px;
	}
	.layer {
		display: flex;
		align-items: center;
		height: 19px;
		padding-left: 3px;
		border-bottom: 1px solid #000;
	}
	.lock {
		width: 13px;
		height: 14px;
		margin-left: 3px;
		box-shadow: inset 1px 1px #999, inset -1px -1px #fff;
	}
	.tint {
		width: 4px;
		height: 15px;
		margin: 0 4px 0 3px;
		background: #4f80ff;
	}
	.name {
		flex: 1;
		display: flex;
		align-items: center;
		height: 18px;
		padding-right: 14px;
		border-left: 1px solid #000;
		background: linear-gradient(225deg, #000 3px, #39f 4px) 15px 0 no-repeat;
		color: #fff;
		font-size: 13px;
		font-weight: 500;
	}
	.name i {
		width: 16px;
		height: 16px;
		margin: 0 3px 0 17px;
		border: 1px solid #000;
		background: #fff;
	}
	.name svg {
		margin-left: auto;
	}
	.layer-footer {
		padding: 0 22px 0 11px;
	}
	.layer-footer span {
		margin-right: 8px;
	}
	.pathfinder {
		height: 83px;
		padding: 4px 0 0 5px;
	}
	.pathfinder p {
		margin: 0;
	}
	.ops {
		display: flex;
		align-items: center;
		gap: 14px;
		height: 18px;
		padding-left: 5px;
		margin-bottom: 5px;
	}
	.window .expand {
		width: 56px;
		height: 18px;
		margin-left: -3px;
		border: 1px solid #aaa;
		border-radius: 2px;
		background: #e8e8e8;
		color: #888;
	}
	.character {
		padding: 6px 7px 0 5px;
	}
	.wide {
		height: 20px;
		margin-bottom: 2px;
	}
	.character hr {
		margin: 4px 2px 3px 0;
	}
	.metrics {
		display: grid;
		grid-template-columns: 18px 80px 18px 74px;
		gap: 3px;
		padding-left: 3px;
	}
	.metric {
		width: 74px;
	}
</style>
